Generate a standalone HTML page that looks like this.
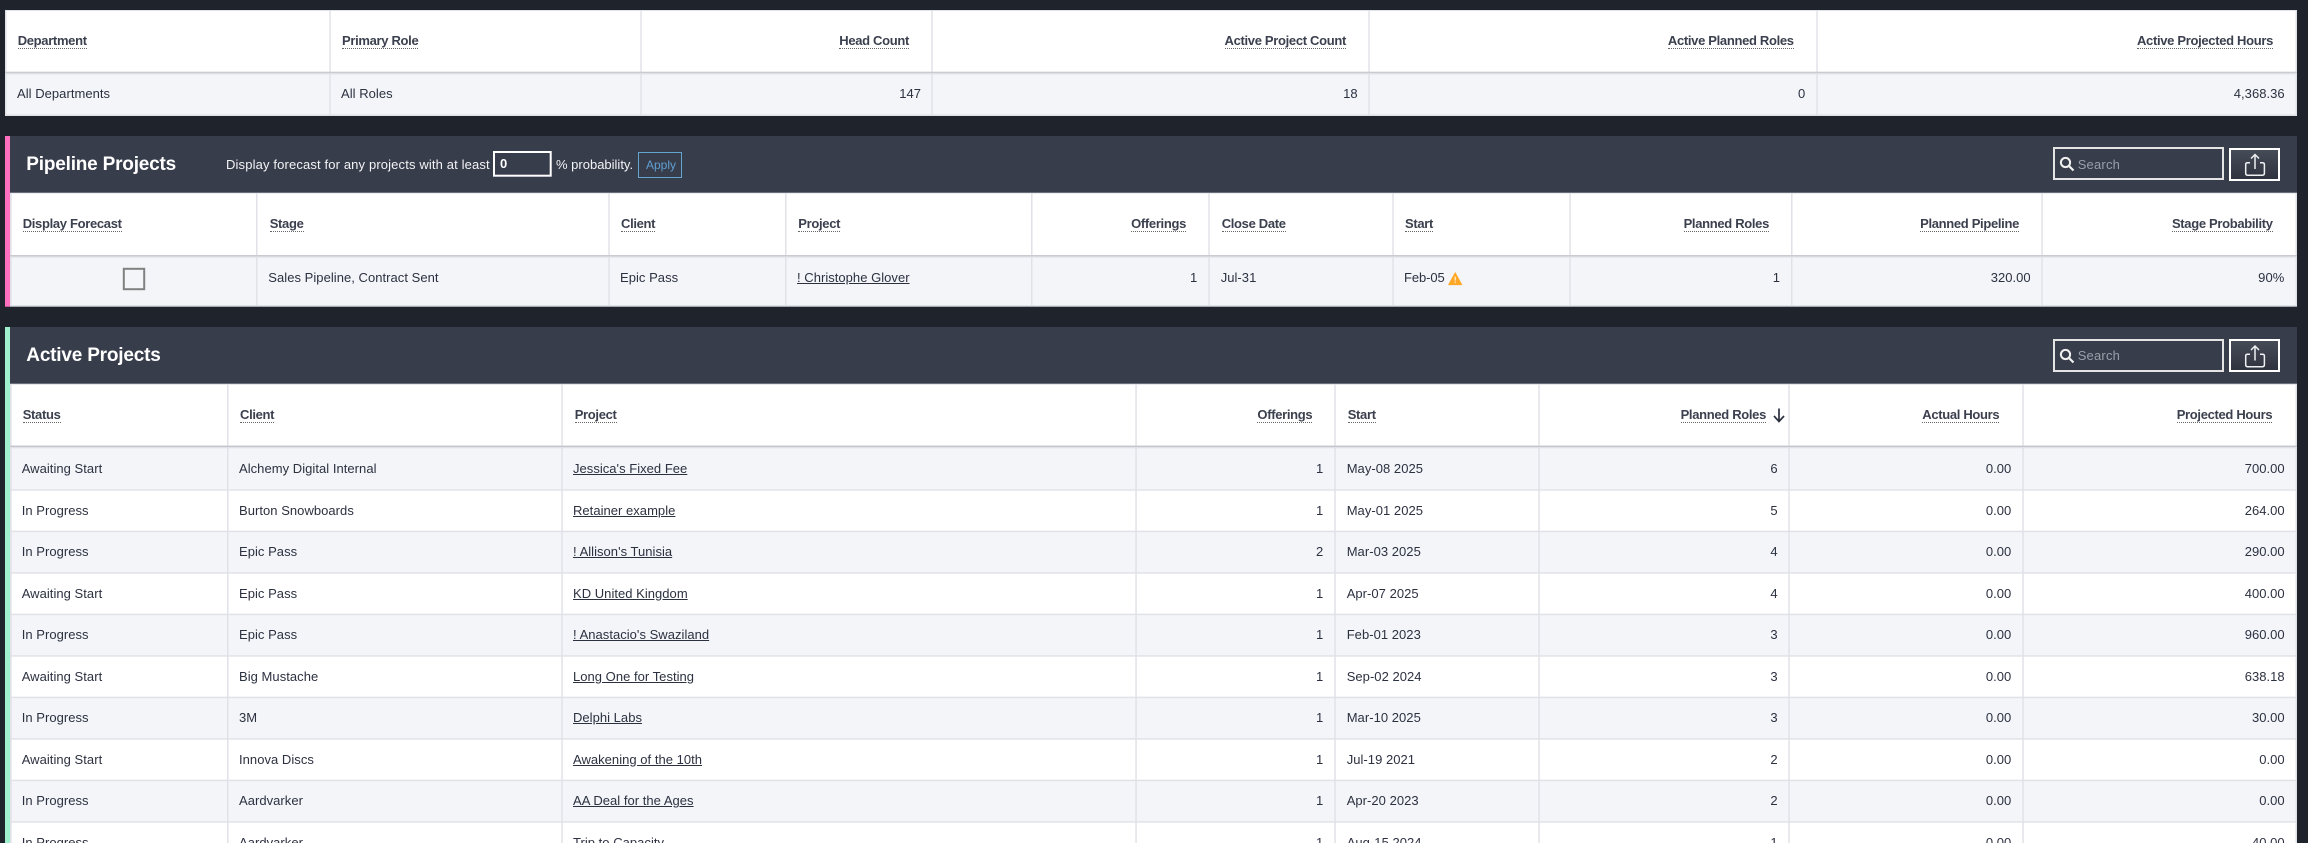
<!DOCTYPE html>
<html><head><meta charset="utf-8"><title>Forecast</title>
<style>
html,body{margin:0;padding:0;width:2308px;height:843px;overflow:hidden;background:#1f232c}
body{position:relative;font-family:"Liberation Sans",Arial,sans-serif;font-size:13px;color:#2c3140;letter-spacing:.04px}
svg{position:absolute;left:0;top:0}
.t,.r>*{position:absolute;white-space:nowrap;line-height:20px;height:20px}
.r{position:absolute;left:0;width:2308px;height:20px;margin-top:1px}
.r.h{margin-top:0}
.h{font-weight:bold;color:#3b404e;letter-spacing:-.32px}
.h span,span.d{display:inline-block;line-height:18px;height:16px;border-bottom:1px dotted #666;margin-top:1px}
a{color:#2c3140;text-decoration:underline;letter-spacing:.03px}
.title{font-size:19px;font-weight:bold;color:#fff;letter-spacing:-.2px;line-height:24px;height:24px}
.w{color:#f2f3f5;letter-spacing:.14px}
.ph{color:#9a9fa9;letter-spacing:.2px}
.s{left:21.7px}.c{left:239px}.p{left:573px}.st{left:1346.7px}
.o{right:984.7px}.n{right:530.3px}.ah{right:296.7px}.ph2{right:23.3px}
</style></head><body>
<svg width="2308" height="843" viewBox="0 0 2308 843">
<rect width="2308" height="843" fill="#1f232c"/>
<!-- top table -->
<rect x="5" y="10" width="2292" height="106" fill="#e0e2e8"/>
<rect x="6.5" y="11" width="2289" height="61" fill="#fff"/>
<rect x="6.5" y="74.5" width="2289" height="39.8" fill="#f3f5f9"/>
<g fill="#e0e2e8">
<rect x="329.3" y="11" width="1.5" height="104"/><rect x="640.3" y="11" width="1.5" height="104"/><rect x="931.3" y="11" width="1.5" height="104"/><rect x="1368.3" y="11" width="1.5" height="104"/><rect x="1816.3" y="11" width="1.5" height="104"/>
</g>
<rect x="5" y="71.7" width="2292" height="1.4" fill="#c9cbd0"/>
<!-- pipeline -->
<rect x="5" y="136" width="5" height="170.7" fill="#ff6fbf"/>
<rect x="10" y="136" width="2287" height="170.7" fill="#e0e2e8"/>
<rect x="10" y="136" width="2287" height="56.7" fill="#383d4b"/>
<rect x="11.7" y="193.6" width="2283.8" height="61.4" fill="#fff"/>
<rect x="11.7" y="257.7" width="2283.8" height="47.3" fill="#f3f5f9"/>
<g fill="#e0e2e8">
<rect x="256" y="193" width="1.5" height="113"/><rect x="608.3" y="193" width="1.5" height="113"/><rect x="785" y="193" width="1.5" height="113"/><rect x="1031" y="193" width="1.5" height="113"/><rect x="1208.3" y="193" width="1.5" height="113"/><rect x="1392.3" y="193" width="1.5" height="113"/><rect x="1569.3" y="193" width="1.5" height="113"/><rect x="1791" y="193" width="1.5" height="113"/><rect x="2041.3" y="193" width="1.5" height="113"/>
</g>
<rect x="10" y="255" width="2287" height="1.4" fill="#c9cbd0"/>
<rect x="123.8" y="268.8" width="20.4" height="20.4" fill="none" stroke="#808080" stroke-width="2"/>
<path d="M1455.2 272.7 L1461.8 284.7 H1448.6 Z" fill="#ffa726" stroke="#ffa726" stroke-width=".8" stroke-linejoin="round"/>
<rect x="1454.6" y="276.6" width="1.2" height="4" fill="#fff3d8"/><rect x="1454.6" y="281.6" width="1.2" height="1.3" fill="#fff3d8"/>
<!-- active -->
<rect x="5" y="327" width="5" height="516" fill="#9ef0cf"/>
<rect x="10" y="327" width="2287" height="516" fill="#e0e2e8"/>
<rect x="10" y="327" width="2287" height="56.7" fill="#383d4b"/>
<rect x="11.7" y="384.8" width="2283.8" height="60.8" fill="#fff"/>
<g fill="#f3f5f9">
<rect x="11.7" y="448.3" width="2283.8" height="41"/>
<rect x="11.7" y="532.2" width="2283.8" height="40"/>
<rect x="11.7" y="615.2" width="2283.8" height="40"/>
<rect x="11.7" y="698.2" width="2283.8" height="40"/>
<rect x="11.7" y="781.2" width="2283.8" height="40"/>
</g>
<g fill="#fff">
<rect x="11.7" y="490.7" width="2283.8" height="40"/>
<rect x="11.7" y="573.7" width="2283.8" height="40"/>
<rect x="11.7" y="656.7" width="2283.8" height="40"/>
<rect x="11.7" y="739.7" width="2283.8" height="40"/>
<rect x="11.7" y="822.7" width="2283.8" height="21"/>
</g>
<g fill="#e0e2e8">
<rect x="227" y="384" width="1.5" height="459"/><rect x="561.3" y="384" width="1.5" height="459"/><rect x="1135.3" y="384" width="1.5" height="459"/><rect x="1334.3" y="384" width="1.5" height="459"/><rect x="1538.3" y="384" width="1.5" height="459"/><rect x="1788.3" y="384" width="1.5" height="459"/><rect x="2022.3" y="384" width="1.5" height="459"/>
</g>
<rect x="10" y="445.6" width="2287" height="1.4" fill="#c4c6cc"/>
<!-- sort arrow -->
<path d="M1779 408.5 V421 M1774 416 L1779 421.5 L1784 416" fill="none" stroke="#2c3140" stroke-width="1.7"/>
<!-- inputs -->
<rect x="494" y="152" width="56.7" height="23.7" fill="#383d4b" stroke="#fff" stroke-width="2"/>
<rect x="638.5" y="152.5" width="43" height="25" fill="none" stroke="#64a6cf" stroke-width="1"/>
<defs><linearGradient id="g" x1="0" y1="0" x2="0" y2="1"><stop offset="0" stop-color="#474c59"/><stop offset="1" stop-color="#2e323e"/></linearGradient></defs>
<g id="tools">
<rect x="2054" y="148" width="169" height="31" fill="#383d4b" stroke="#e4e4e4" stroke-width="2"/>
<circle cx="2065.5" cy="162.5" r="4.6" fill="none" stroke="#f0f0f0" stroke-width="2"/>
<path d="M2069 166 L2073.5 170.5" stroke="#f0f0f0" stroke-width="2.2"/>
<rect x="2230" y="149" width="49" height="31" fill="url(#g)" stroke="#fff" stroke-width="2"/>
<path d="M2250 162.7 H2247.5 Q2245.7 162.7 2245.7 164.5 V173.3 Q2245.7 175.2 2247.5 175.2 H2262.5 Q2264.4 175.2 2264.4 173.3 V164.5 Q2264.4 162.7 2262.5 162.7 H2260 M2255 169 V154.8 M2251 158.5 L2255 154.5 L2259 158.5" fill="none" stroke="#eef0f2" stroke-width="1.5"/>
</g>
<g>
<rect x="2054" y="340" width="169" height="31" fill="#383d4b" stroke="#e4e4e4" stroke-width="2"/>
<circle cx="2065.5" cy="354.5" r="4.6" fill="none" stroke="#f0f0f0" stroke-width="2"/>
<path d="M2069 358 L2073.5 362.5" stroke="#f0f0f0" stroke-width="2.2"/>
<rect x="2230" y="340" width="49" height="31" fill="url(#g)" stroke="#fff" stroke-width="2"/>
<path d="M2250 354.2 H2247.5 Q2245.7 354.2 2245.7 356 V364.8 Q2245.7 366.7 2247.5 366.7 H2262.5 Q2264.4 366.7 2264.4 364.8 V356 Q2264.4 354.2 2262.5 354.2 H2260 M2255 360.5 V346.3 M2251 350 L2255 346 L2259 350" fill="none" stroke="#eef0f2" stroke-width="1.5"/>
</g>
</svg>

<!-- top table text -->
<div class="r h" style="top:30.7px">
<div style="left:17.7px"><span>Department</span></div>
<div style="left:342px"><span>Primary Role</span></div>
<div style="right:1399px"><span>Head Count</span></div>
<div style="right:962px"><span>Active Project Count</span></div>
<div style="right:514.3px"><span>Active Planned Roles</span></div>
<div style="right:35px"><span>Active Projected Hours</span></div>
</div>
<div class="r" style="top:83px">
<div style="left:17px">All Departments</div>
<div style="left:341px">All Roles</div>
<div style="right:1387px">147</div>
<div style="right:950.3px">18</div>
<div style="right:502.7px">0</div>
<div style="right:23.3px">4,368.36</div>
</div>

<!-- pipeline -->
<div class="t title" style="left:26.3px;top:153px">Pipeline Projects</div>
<div class="t w" style="left:226px;top:154.5px">Display forecast for any projects with at least</div>
<div class="t" style="left:500px;top:154px;color:#fff;font-weight:bold">0</div>
<div class="t w" style="left:556px;top:154.5px;letter-spacing:0">% probability.</div>
<div class="t" style="left:646px;top:155px;color:#5f9fd2;font-size:12px;letter-spacing:0">Apply</div>
<div class="t ph" style="left:2077.7px;top:155px">Search</div>

<div class="r h" style="top:214.3px">
<div style="left:22.7px"><span>Display Forecast</span></div>
<div style="left:269.7px"><span>Stage</span></div>
<div style="left:621px"><span>Client</span></div>
<div style="left:798.3px"><span>Project</span></div>
<div style="right:1122px"><span>Offerings</span></div>
<div style="left:1221.7px"><span>Close Date</span></div>
<div style="left:1405px"><span>Start</span></div>
<div style="right:539px"><span>Planned Roles</span></div>
<div style="right:289px"><span>Planned Pipeline</span></div>
<div style="right:35.3px"><span>Stage Probability</span></div>
</div>
<div class="r" style="top:267px">
<div style="left:268.3px">Sales Pipeline, Contract Sent</div>
<div style="left:620px">Epic Pass</div>
<div style="left:797px"><a>! Christophe Glover</a></div>
<div style="right:1110.7px">1</div>
<div style="left:1220.7px">Jul-31</div>
<div style="left:1404px;letter-spacing:-.1px">Feb-05</div>
<div style="right:528px">1</div>
<div style="right:277.3px">320.00</div>
<div style="right:23.7px">90%</div>
</div>

<!-- active -->
<div class="t title" style="left:26.3px;top:344px">Active Projects</div>
<div class="t ph" style="left:2077.7px;top:346px">Search</div>
<div class="r h" style="top:405px">
<div style="left:22.7px"><span>Status</span></div>
<div style="left:240px"><span>Client</span></div>
<div style="left:574.7px"><span>Project</span></div>
<div style="right:995.7px"><span>Offerings</span></div>
<div style="left:1347.7px"><span>Start</span></div>
<div style="right:542px"><span>Planned Roles</span></div>
<div style="right:308.7px"><span>Actual Hours</span></div>
<div style="right:35.7px"><span>Projected Hours</span></div>
</div>

<div class="r" style="top:458.3px"><div class="s">Awaiting Start</div><div class="c">Alchemy Digital Internal</div><div class="p"><a>Jessica's Fixed Fee</a></div><div class="o">1</div><div class="st">May-08 2025</div><div class="n">6</div><div class="ah">0.00</div><div class="ph2">700.00</div></div>
<div class="r" style="top:499.8px"><div class="s">In Progress</div><div class="c">Burton Snowboards</div><div class="p"><a>Retainer example</a></div><div class="o">1</div><div class="st">May-01 2025</div><div class="n">5</div><div class="ah">0.00</div><div class="ph2">264.00</div></div>
<div class="r" style="top:541.3px"><div class="s">In Progress</div><div class="c">Epic Pass</div><div class="p"><a>! Allison's Tunisia</a></div><div class="o">2</div><div class="st">Mar-03 2025</div><div class="n">4</div><div class="ah">0.00</div><div class="ph2">290.00</div></div>
<div class="r" style="top:582.8px"><div class="s">Awaiting Start</div><div class="c">Epic Pass</div><div class="p"><a>KD United Kingdom</a></div><div class="o">1</div><div class="st">Apr-07 2025</div><div class="n">4</div><div class="ah">0.00</div><div class="ph2">400.00</div></div>
<div class="r" style="top:624.3px"><div class="s">In Progress</div><div class="c">Epic Pass</div><div class="p"><a>! Anastacio's Swaziland</a></div><div class="o">1</div><div class="st">Feb-01 2023</div><div class="n">3</div><div class="ah">0.00</div><div class="ph2">960.00</div></div>
<div class="r" style="top:665.8px"><div class="s">Awaiting Start</div><div class="c">Big Mustache</div><div class="p"><a>Long One for Testing</a></div><div class="o">1</div><div class="st">Sep-02 2024</div><div class="n">3</div><div class="ah">0.00</div><div class="ph2">638.18</div></div>
<div class="r" style="top:707.3px"><div class="s">In Progress</div><div class="c">3M</div><div class="p"><a>Delphi Labs</a></div><div class="o">1</div><div class="st">Mar-10 2025</div><div class="n">3</div><div class="ah">0.00</div><div class="ph2">30.00</div></div>
<div class="r" style="top:748.8px"><div class="s">Awaiting Start</div><div class="c">Innova Discs</div><div class="p"><a>Awakening of the 10th</a></div><div class="o">1</div><div class="st">Jul-19 2021</div><div class="n">2</div><div class="ah">0.00</div><div class="ph2">0.00</div></div>
<div class="r" style="top:790.3px"><div class="s">In Progress</div><div class="c">Aardvarker</div><div class="p"><a>AA Deal for the Ages</a></div><div class="o">1</div><div class="st">Apr-20 2023</div><div class="n">2</div><div class="ah">0.00</div><div class="ph2">0.00</div></div>
<div class="r" style="top:831.8px"><div class="s">In Progress</div><div class="c">Aardvarker</div><div class="p"><a>Trip to Capacity</a></div><div class="o">1</div><div class="st">Aug-15 2024</div><div class="n">1</div><div class="ah">0.00</div><div class="ph2">40.00</div></div>
</body></html>
